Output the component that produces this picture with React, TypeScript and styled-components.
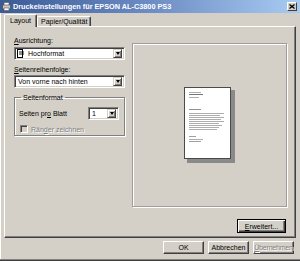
import React from "react";
import styled, { createGlobalStyle } from "styled-components";

const GlobalStyle = createGlobalStyle`
  html, body {
    margin: 0;
    padding: 0;
    background: #d4d0c8;
  }
  body {
    font-family: "Liberation Sans", Arial, sans-serif;
    font-size: 7px;
    color: #000;
  }
`;

const Window = styled.div`
  width: 300px;
  height: 261px;
  box-sizing: border-box;
  background: #d4d0c8;
  border-bottom: 1px solid #404040;
  box-shadow: inset 0 -1px #808080, inset 1px 0 #fff;
  display: flex;
  flex-direction: column;
  overflow: hidden;
`;

const TitleBar = styled.div`
  height: 13px;
  flex: none;
  display: flex;
  align-items: center;
  padding: 0 3px 0 2px;
  gap: 2px;
  background: linear-gradient(90deg, #3b5b97 0%, #6d8cc4 50%, #a8ccf2 100%);
`;

const TitleText = styled.div`
  flex: 1;
  color: #fff;
  font-weight: bold;
  font-size: 7.3px;
  line-height: 13px;
  white-space: nowrap;
`;

const CloseButton = styled.div`
  width: 10px;
  height: 9px;
  box-sizing: border-box;
  background: #d4d0c8;
  border: 1px solid;
  border-color: #fff #404040 #404040 #fff;
  display: flex;
  align-items: center;
  justify-content: center;
`;

const Content = styled.div`
  flex: 1;
  display: flex;
  flex-direction: column;
  padding: 1px 4px 0 4px;
`;

const TabStrip = styled.div`
  height: 12px;
  display: flex;
  align-items: flex-end;
  position: relative;
  z-index: 1;
`;

const Tab = styled.div<{ $active?: boolean }>`
  box-sizing: border-box;
  height: ${(p) => (p.$active ? 13 : 10)}px;
  margin-bottom: ${(p) => (p.$active ? -1 : 0)}px;
  padding: 0 ${(p) => (p.$active ? 5 : 3)}px;
  background: #d4d0c8;
  border-top: 1px solid #fff;
  border-left: 1px solid #fff;
  border-right: 1px solid #404040;
  box-shadow: inset -1px 0 #808080;
  border-radius: 2px 2px 0 0;
  line-height: ${(p) => (p.$active ? 11 : 9)}px;
  font-size: 7px;
  white-space: nowrap;
`;

const Panel = styled.div`
  height: 212px;
  box-sizing: border-box;
  border-top: 1px solid #fff;
  border-left: 1px solid #fff;
  border-right: 1px solid #404040;
  border-bottom: 1px solid #404040;
  box-shadow: inset -1px -1px #808080;
  padding: 9px 8px 0 9px;
  display: grid;
  grid-template-columns: 111px 1fr;
  column-gap: 7px;
  align-items: start;
`;

const Column = styled.div`
  display: flex;
  flex-direction: column;
`;

const Label = styled.div<{ $top?: number }>`
  height: 9px;
  line-height: 9px;
  margin-top: ${(p) => p.$top ?? 0}px;
  white-space: nowrap;
`;

const Combo = styled.div<{ $top?: number; $width?: number }>`
  box-sizing: border-box;
  height: 13px;
  width: ${(p) => (p.$width ? `${p.$width}px` : "100%")};
  margin-top: ${(p) => p.$top ?? 0}px;
  background: #fff;
  border: 1px solid;
  border-color: #808080 #fff #fff #808080;
  box-shadow: inset 1px 1px #404040, inset -1px -1px #d4d0c8;
  padding: 2px;
  display: flex;
  align-items: center;
  gap: 2px;
`;

const ComboText = styled.div`
  flex: 1;
  padding-left: 1px;
  line-height: 9px;
  white-space: nowrap;
  overflow: hidden;
`;

const ArrowButton = styled.div`
  width: 9px;
  height: 9px;
  box-sizing: border-box;
  background: #d4d0c8;
  border-top: 1px solid #d4d0c8;
  border-left: 1px solid #d4d0c8;
  border-right: 1px solid #404040;
  border-bottom: 1px solid #404040;
  box-shadow: inset 1px 1px #fff, inset -1px -1px #808080;
  display: flex;
  align-items: center;
  justify-content: center;

  &::after {
    content: "";
    border-left: 2.5px solid transparent;
    border-right: 2.5px solid transparent;
    border-top: 3px solid #000;
  }
`;

const GroupBox = styled.fieldset`
  margin: 5px 0 0 0;
  padding: 0 5px 2px 4px;
  min-width: 0;
  border: 1px solid #808080;
  box-shadow: 1px 1px #fff, inset 1px 1px #fff;
  display: flex;
  flex-direction: column;
`;

const Legend = styled.legend`
  padding: 0 2px;
  margin-left: 2px;
  line-height: 9px;
  font-size: 7px;
`;

const Row = styled.div<{ $top?: number }>`
  display: flex;
  align-items: center;
  justify-content: space-between;
  margin-top: ${(p) => p.$top ?? 0}px;
`;

const CheckRow = styled.div<{ $top?: number }>`
  display: flex;
  align-items: center;
  gap: 3px;
  margin-top: ${(p) => p.$top ?? 0}px;
  padding-left: 1px;
  height: 8px;
`;

const CheckBox = styled.div`
  width: 8px;
  height: 8px;
  box-sizing: border-box;
  background: #d4d0c8;
  border: 1px solid;
  border-color: #808080 #fff #fff #808080;
  box-shadow: inset 1px 1px #404040;
`;

const Disabled = styled.span`
  color: #808080;
  text-shadow: 1px 1px #fff;
  line-height: 9px;
`;

const Preview = styled.div`
  margin-top: 7px;
  height: 164px;
  box-sizing: border-box;
  border: 1px solid #a09d96;
  box-shadow: 1px 1px #fff, inset 1px 1px #fff;
  display: flex;
  align-items: center;
  justify-content: center;
`;

const Button = styled.div<{ $default?: boolean; $width?: number; $disabled?: boolean }>`
  box-sizing: border-box;
  width: ${(p) => p.$width ?? 41}px;
  height: ${(p) => (p.$default ? 14 : 13)}px;
  background: #d4d0c8;
  border: 1px solid;
  border-color: ${(p) => (p.$default ? "#000" : "#fff #404040 #404040 #fff")};
  box-shadow: ${(p) =>
    p.$default
      ? "inset 1px 1px #fff, inset -1px -1px #404040, inset -2px -2px #808080"
      : "inset -1px -1px #808080"};
  display: flex;
  align-items: center;
  justify-content: center;
  line-height: 9px;
  white-space: nowrap;
  letter-spacing: ${(p) => (p.$disabled ? "-0.2px" : "0")};
  color: ${(p) => (p.$disabled ? "#808080" : "#000")};
  text-shadow: ${(p) => (p.$disabled ? "1px 1px #fff" : "none")};
`;

const RightFoot = styled.div`
  display: flex;
  justify-content: flex-end;
  margin-top: 12px;
  padding-right: 1px;
`;

const Footer = styled.div`
  display: flex;
  justify-content: flex-end;
  gap: 4px;
  margin-top: 3px;
  padding-right: 2px;
`;

const U = styled.span`
  text-decoration: underline;
`;

const PrinterIcon = () => (
  <svg width="9" height="9" viewBox="0 0 9 9">
    <rect x="2" y="0.5" width="5" height="3" fill="#fff" stroke="#555" strokeWidth="0.6" />
    <rect x="0.5" y="3" width="8" height="4" fill="#c8c8c8" stroke="#444" strokeWidth="0.6" />
    <rect x="2" y="6" width="5" height="2.5" fill="#fff" stroke="#555" strokeWidth="0.6" />
  </svg>
);

const CloseIcon = () => (
  <svg width="6" height="5" viewBox="0 0 6 5">
    <path d="M0.5 0.5 L5.5 4.5 M5.5 0.5 L0.5 4.5" stroke="#000" strokeWidth="1.3" />
  </svg>
);

const PortraitIcon = () => (
  <svg width="8" height="9" viewBox="0 0 8 9">
    <rect x="0.5" y="0.5" width="5" height="8" fill="#fff" stroke="#000" />
    <path d="M2 3h5M2 5h5M5.5 2v5" stroke="#000" strokeWidth="0.9" />
  </svg>
);

const lines: [number, number, number, string][] = [
  [5, 12, 5, "#9a9a9a"],
  [5, 14, 7, "#555"],
  [5, 10, 10, "#9a9a9a"],
  [5, 12, 22, "#777"],
  [5, 35, 26, "#999"],
  [5, 31, 28, "#999"],
  [5, 35, 30, "#999"],
  [5, 32, 32, "#999"],
  [5, 35, 34, "#999"],
  [5, 30, 36, "#999"],
  [5, 33, 38, "#999"],
  [5, 30, 40, "#999"],
  [5, 28, 42, "#999"],
  [5, 7, 49, "#888"],
  [5, 14, 52, "#999"],
  [5, 12, 54, "#888"],
];

const PagePreview = () => (
  <svg width="51" height="76" viewBox="0 0 51 76">
    <rect x="3" y="3" width="48" height="73" fill="#8a8a8a" />
    <rect x="0.5" y="0.5" width="46" height="71" fill="#fff" stroke="#4a4a4a" />
    {lines.map(([x, w, y, c], i) => (
      <rect key={i} x={x} y={y} width={w} height="0.8" fill={c} />
    ))}
  </svg>
);

export default function App() {
  return (
    <>
      <GlobalStyle />
      <Window>
        <TitleBar>
          <PrinterIcon />
          <TitleText>Druckeinstellungen für EPSON AL-C3800 PS3</TitleText>
          <CloseButton>
            <CloseIcon />
          </CloseButton>
        </TitleBar>
        <Content>
          <TabStrip>
            <Tab $active>Layout</Tab>
            <Tab>Papier/Qualität</Tab>
          </TabStrip>
          <Panel>
            <Column>
              <Label>
                <U>A</U>usrichtung:
              </Label>
              <Combo $top={2}>
                <PortraitIcon />
                <ComboText>Hochformat</ComboText>
                <ArrowButton />
              </Combo>
              <Label $top={5}>
                <U>S</U>eitenreihenfolge:
              </Label>
              <Combo $top={1}>
                <ComboText>Von vorne nach hinten</ComboText>
                <ArrowButton />
              </Combo>
              <GroupBox>
                <Legend>Seitenformat</Legend>
                <Row $top={5}>
                  <span>
                    Seiten pr<U>o</U> Blatt
                  </span>
                  <Combo $width={31}>
                    <ComboText>1</ComboText>
                    <ArrowButton />
                  </Combo>
                </Row>
                <CheckRow $top={5}>
                  <CheckBox />
                  <Disabled>
                    Rän<U>d</U>er zeichnen
                  </Disabled>
                </CheckRow>
              </GroupBox>
            </Column>
            <Column>
              <Preview>
                <PagePreview />
              </Preview>
              <RightFoot>
                <Button $default $width={49}>
                  <span>
                    <U>E</U>rweitert...
                  </span>
                </Button>
              </RightFoot>
            </Column>
          </Panel>
          <Footer>
            <Button>OK</Button>
            <Button>Abbrechen</Button>
            <Button $disabled>
              <span>
                <U>Ü</U>bernehmen
              </span>
            </Button>
          </Footer>
        </Content>
      </Window>
    </>
  );
}
